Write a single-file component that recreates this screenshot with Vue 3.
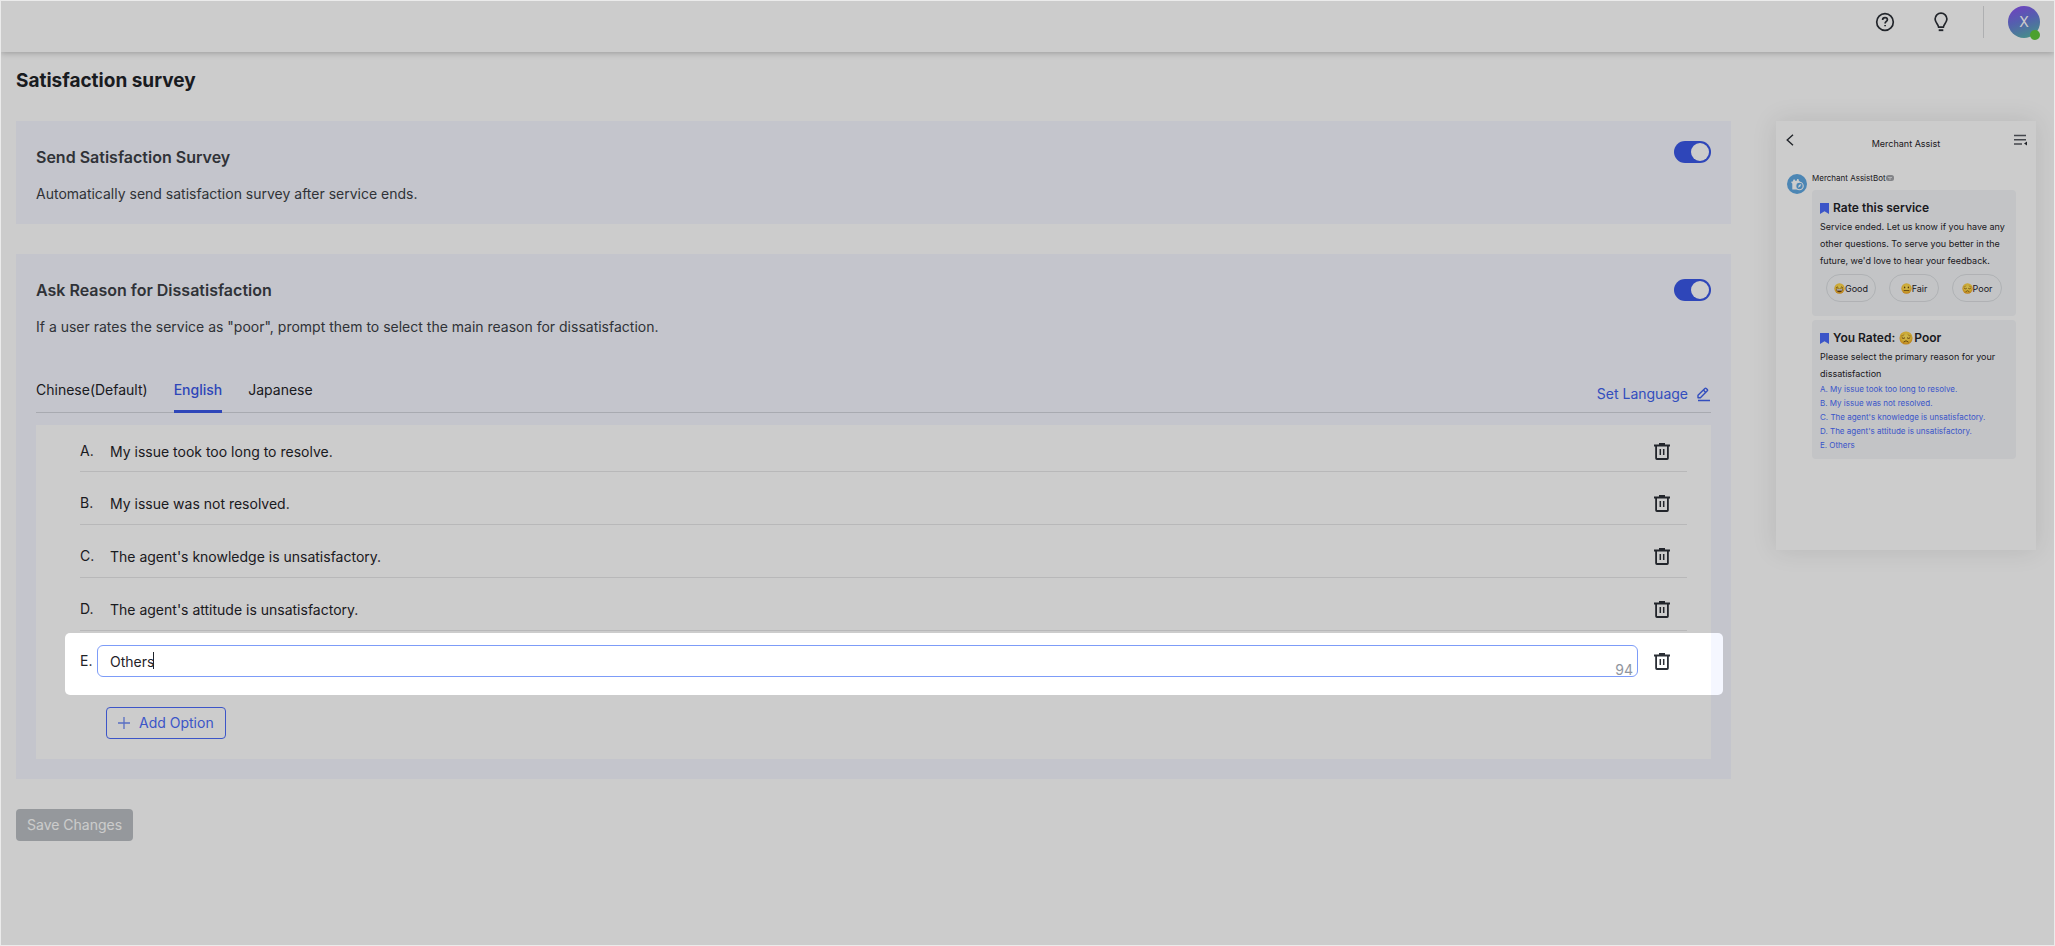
<script setup>
import { ref } from 'vue'

const sendSurvey = ref(true)
const askReason = ref(true)
const tabs = ['Chinese(Default)', 'English', 'Japanese']
const activeTab = ref('English')
const options = ref([
  { letter: 'A', text: 'My issue took too long to resolve.' },
  { letter: 'B', text: 'My issue was not resolved.' },
  { letter: 'C', text: "The agent's knowledge is unsatisfactory." },
  { letter: 'D', text: "The agent's attitude is unsatisfactory." },
  { letter: 'E', text: 'Others', editing: true },
])
const ratings = [
  { label: 'Good', face: 'good' },
  { label: 'Fair', face: 'fair' },
  { label: 'Poor', face: 'poor' },
]
</script>

<template>
  <div class="frame">
    <div class="page">
      <svg class="defs" aria-hidden="true">
        <defs>
          <radialGradient id="face-fill" cx=".5" cy=".4" r=".62">
            <stop offset="0" stop-color="#ffe766" />
            <stop offset=".6" stop-color="#ffd23e" />
            <stop offset="1" stop-color="#ec9a1e" />
          </radialGradient>
          <symbol id="face-good" viewBox="0 0 16 16">
            <circle cx="8" cy="8" r="7.5" fill="url(#face-fill)" />
            <path d="M3.5 6.6q1.2-2 2.6 0M9.9 6.6q1.3-2 2.6 0" fill="none" stroke="#6b3f0a" stroke-width="1.2" stroke-linecap="round" />
            <path d="M2.8 8.5h10.4c-.3 3.2-2.4 5-5.2 5s-4.900-1.800-5.200-5z" fill="#6b3f0a" />
            <path d="M3.500 9h9l-.6 1.800H4.100z" fill="#fff" />
          </symbol>
          <symbol id="face-fair" viewBox="0 0 16 16">
            <circle cx="8" cy="8" r="7.5" fill="url(#face-fill)" />
            <ellipse cx="5.3" cy="6.5" rx="1" ry="1.3" fill="#6b3f0a" />
            <ellipse cx="10.7" cy="6.5" rx="1" ry="1.3" fill="#6b3f0a" />
            <path d="M4.5 11h7" stroke="#6b3f0a" stroke-width="1.2" stroke-linecap="round" />
          </symbol>
          <symbol id="face-poor" viewBox="0 0 16 16">
            <circle cx="8" cy="8" r="7.5" fill="url(#face-fill)" />
            <path d="M2.8 5.8q2-.2 3-1.6M13.2 5.800q-2-.2-3-1.600" fill="none" stroke="#8a5a10" stroke-width=".6" stroke-linecap="round" />
            <path d="M3.600 8q1.400 1.200 2.900 0M9.500 8q1.500 1.200 2.900 0M5.500 12.400q2.500-2.800 5 0" fill="none" stroke="#6b3f0a" stroke-width="1" stroke-linecap="round" />
          </symbol>
          <symbol id="bookmark" viewBox="0 0 9 11">
            <path d="M0 0h9v11L4.500 8.200 0 11z" fill="#4b6bfb" />
          </symbol>
        </defs>
      </svg>

      <header class="topbar">
        <button class="icon-btn" type="button" aria-label="Help">
          <svg width="20" height="20" viewBox="0 0 20 20" fill="none" stroke="#2b2f36" stroke-width="1.7">
            <circle cx="10" cy="10" r="8.300" />
            <path d="M7.600 8.100c0-1.500 1-2.400 2.400-2.400s2.400.9 2.400 2.100c0 1.600-2.300 1.800-2.300 3.700" />
            <path d="M10.100 12.900v1.400" />
          </svg>
        </button>
        <button class="icon-btn" type="button" aria-label="Tips">
          <svg width="20" height="20" viewBox="0 0 20 20" fill="none" stroke="#2b2f36" stroke-width="1.7">
            <path d="M7.600 15.200c0-3-3.500-4.300-3.500-8.200a5.900 5.900 0 0 1 11.800 0c0 3.900-3.500 5.200-3.500 8.200z" stroke-linejoin="round" />
            <path d="M7.700 18.200h4.600" stroke-width="1.900" />
          </svg>
        </button>
        <span class="divider"></span>
        <button class="avatar" type="button" aria-label="Account">X<span class="status"></span></button>
      </header>

      <main class="content">
        <div class="settings">
          <h1>Satisfaction survey</h1>

          <section class="card">
            <div class="card-head top">
              <h2 id="send-title">Send Satisfaction Survey</h2>
              <input v-model="sendSurvey" class="switch" type="checkbox" role="switch" aria-labelledby="send-title" />
            </div>
            <p class="desc">Automatically send satisfaction survey after service ends.</p>
          </section>

          <section class="card reasons">
            <div class="card-head">
              <h2 id="ask-title">Ask Reason for Dissatisfaction</h2>
              <input v-model="askReason" class="switch" type="checkbox" role="switch" aria-labelledby="ask-title" />
            </div>
            <p class="desc">If a user rates the service as "poor", prompt them to select the main reason for dissatisfaction.</p>

            <div class="tab-row">
              <div class="tabs" role="tablist">
                <button
                  v-for="tab in tabs"
                  :key="tab"
                  type="button"
                  role="tab"
                  class="tab"
                  :class="{ active: tab === activeTab }"
                  :aria-selected="tab === activeTab"
                  @click="activeTab = tab"
                >{{ tab }}</button>
              </div>
              <button class="set-language" type="button">
                Set Language
                <svg width="15" height="15" viewBox="0 0 15 15" fill="none" stroke="#4062ee" stroke-width="1.400">
                  <path d="M2 8.300 8.900 1.400a.9.9 0 0 1 1.300 0l1.100 1.100a.9.9 0 0 1 0 1.300L4.400 10.700H2z" stroke-linejoin="round" />
                  <path d="M7.400 3.100l2.300 2.300M2 13.500h12" />
                </svg>
              </button>
            </div>

            <div class="panel">
              <ul class="options">
                <li v-for="option in options" :key="option.letter" class="option" :class="{ editing: option.editing }">
                  <label class="letter" :for="'option-' + option.letter">{{ option.letter }}.</label>
                  <div class="field">
                    <input :id="'option-' + option.letter" v-model="option.text" type="text" :readonly="!option.editing" />
                    <span v-if="option.editing" class="caret"></span>
                    <span v-if="option.editing" class="remaining">94</span>
                  </div>
                  <button class="icon-btn" type="button" :aria-label="'Delete option ' + option.letter">
                    <svg width="18" height="18" viewBox="0 0 18 18" fill="none" stroke="#2b2f36" stroke-width="1.800">
                      <path d="M1 3.500h16M3.100 3.500v12.700q0 .8.800.8h10.200q.8 0 .8-.8V3.500" />
                      <path d="M6 2h6" stroke-width="2" />
                      <path d="M7.300 7v6M10.700 7v6" stroke-width="1.500" />
                    </svg>
                  </button>
                </li>
              </ul>
              <button class="add" type="button">
                <svg width="12" height="12" viewBox="0 0 12 12" stroke="#6f8af5" stroke-width="1.300"><path d="M6 0v12M0 6h12" /></svg>
                Add Option
              </button>
            </div>
          </section>

          <button class="save" type="button">Save Changes</button>
        </div>

        <aside class="phone">
          <div class="phone-bar">
            <svg width="8" height="12" viewBox="0 0 8 12" fill="none" stroke="#2b2f36" stroke-width="1.400"><path d="M7 .7 1.200 6 7 11.300" /></svg>
            <span class="phone-title">Merchant Assist</span>
            <svg width="14" height="12" viewBox="0 0 14 12" fill="none" stroke="#55585f" stroke-width="1.600">
              <path d="M0 1.500h12M0 5.700h12M0 10h8" />
              <path d="M10 9.500l3-2v4z" fill="#2b2f36" stroke="none" />
            </svg>
          </div>

          <div class="chat">
            <svg class="bot" width="20" height="20" viewBox="0 0 20 20">
              <circle cx="10" cy="10" r="10" fill="#5fa8e2" />
              <path d="M4.500 7.500h1.300l.7-2h1.300l.4 1.200h1.500l.5-1.700h1.200l.6 2 1.200.7v7.800H5.300V9.400l-1-.6z" fill="#fff" />
              <circle cx="12.500" cy="12" r="3.700" fill="#5fa8e2" stroke="#fff" stroke-width="1.100" />
              <path d="m10.900 13.700 1-2.600 2.400-1-1 2.500z" fill="#fff" />
            </svg>
            <div class="messages">
              <p class="bot-name">
                Merchant AssistBot
                <svg width="8" height="6" viewBox="0 0 8 6"><rect width="8" height="6" rx="2.500" fill="#a4a6aa" /><path d="M2 2.500h4M3 4h2" stroke="#fff" stroke-width=".7" /></svg>
              </p>
              <section class="bubble rate">
                <h3><svg width="9" height="11"><use href="#bookmark" /></svg>Rate this service</h3>
                <p>Service ended. Let us know if you have any other questions. To serve you better in the future, we'd love to hear your feedback.</p>
                <div class="ratings">
                  <button v-for="rating in ratings" :key="rating.label" type="button">
                    <svg width="11" height="11"><use :href="'#face-' + rating.face" /></svg>{{ rating.label }}
                  </button>
                </div>
              </section>
              <section class="bubble">
                <h3>
                  <svg width="9" height="11"><use href="#bookmark" /></svg>You Rated:
                  <svg class="face" width="14" height="14"><use href="#face-poor" /></svg>Poor
                </h3>
                <p>Please select the primary reason for your dissatisfaction</p>
                <ul class="reasons-list">
                  <li v-for="option in options" :key="option.letter"><a href="#">{{ option.letter }}. {{ option.text }}</a></li>
                </ul>
              </section>
            </div>
          </div>
        </aside>
      </main>
    </div>
  </div>
</template>

<style>
body {
  margin: 0;
}
</style>

<style scoped>
* {
  box-sizing: border-box;
}
.frame {
  min-height: 100vh;
  padding: 1px;
  background: #ebebeb;
  display: flex;
  font-family: Inter, "Liberation Sans", sans-serif;
  font-size: 14px;
  line-height: 20px;
  color: #1f2329;
}
.page {
  flex: 1;
  min-width: 0;
  background: #fff;
  overflow: hidden;
}
h1, h2, h3, p, ul {
  margin: 0;
  padding: 0;
}
ul {
  list-style: none;
}
button {
  font: inherit;
  color: inherit;
  background: none;
  border: 0;
  padding: 0;
  cursor: pointer;
}
svg {
  display: block;
  flex: none;
}
.defs {
  width: 0;
  height: 0;
  position: absolute;
}
.topbar {
  height: 51px;
  padding: 0 14px 10px 0;
  display: flex;
  align-items: center;
  justify-content: flex-end;
  box-shadow: 0 1px 6px rgba(0, 0, 0, 0.25);
}
.topbar .icon-btn {
  margin-right: 36px;
}
.divider {
  width: 1px;
  height: 32px;
  margin: 0 24px 0 -4px;
  background: #dadbde;
}
.avatar {
  position: relative;
  width: 32px;
  height: 32px;
  border-radius: 50%;
  background: linear-gradient(160deg, #8b52f0 5%, #6a78da 45%, #55b8a8 95%);
  color: #fff;
}
.status {
  position: absolute;
  right: 0;
  bottom: -2px;
  width: 10px;
  height: 10px;
  border-radius: 50%;
  background: #5fc93a;
}
.content {
  display: flex;
  align-items: flex-start;
  gap: 45px;
  padding: 15px 18px 0 15px;
}
.settings {
  flex: 1;
  min-width: 0;
}
h1 {
  font-size: 19px;
  line-height: 28px;
  font-weight: 700;
  margin-bottom: 26px;
}
.card {
  background: #f5f7ff;
  padding: 20px;
  margin-bottom: 30px;
}
.card-head {
  display: flex;
  justify-content: space-between;
  align-items: center;
  height: 32px;
}
.card-head.top {
  align-items: flex-start;
}
h2 {
  font-size: 16px;
  line-height: 32px;
  font-weight: 600;
  color: #3c3f46;
}
.desc {
  margin-top: 11px;
  color: #3c3f46;
}
.switch {
  appearance: none;
  margin: 0;
  width: 37px;
  height: 22px;
  border-radius: 11px;
  background: #c0c4cc;
  display: flex;
  align-items: center;
  padding: 0 2px;
  cursor: pointer;
}
.switch::before {
  content: "";
  width: 18px;
  height: 18px;
  border-radius: 50%;
  background: #fff;
}
.switch:checked {
  background: #3a58e8;
  justify-content: flex-end;
}
.tab-row {
  margin-top: 42px;
  display: flex;
  align-items: flex-end;
  justify-content: space-between;
  border-bottom: 1px solid #d3d5dc;
}
.tabs {
  display: flex;
  gap: 26px;
}
.tab {
  height: 34px;
  padding-bottom: 10px;
  margin-bottom: -1px;
  border-bottom: 3px solid transparent;
}
.tab.active {
  color: #3a58e8;
  font-weight: 500;
  border-bottom-color: #3a58e8;
  border-radius: 2px 2px 0 0;
}
.set-language {
  display: flex;
  align-items: center;
  gap: 8px;
  height: 36px;
  margin-top: -3px;
  color: #4062ee;
}
.panel {
  margin-top: 12px;
  padding: 0 24px 20px 44px;
  background: #fff;
}
.option {
  position: relative;
  display: flex;
  align-items: center;
  height: 53px;
  padding: 10px 16px 0 0;
  border-bottom: 1px solid #e6e6e8;
}
.option:first-child {
  height: 47px;
  padding-top: 6px;
}
.option.editing {
  border-bottom: 0;
  height: 64px;
  padding-top: 0;
  padding-bottom: 4px;
}
/* Spotlight: dims everything outside the row being edited */
.option.editing::after {
  content: "";
  position: absolute;
  inset: 2px -36px 0 -15px;
  border-radius: 5px;
  box-shadow: 0 0 0 4000px rgba(0, 0, 0, 0.2);
  pointer-events: none;
  z-index: 5;
}
.letter {
  width: 17px;
  flex: none;
}
.field {
  position: relative;
  flex: 1;
  margin-right: 15px;
}
.field input {
  display: block;
  width: 100%;
  height: 32px;
  padding: 0 12px;
  border: 1px solid transparent;
  border-radius: 6px;
  background: transparent;
  font: inherit;
  color: inherit;
  outline: none;
}
.editing .field input {
  border-color: #7d9cf8;
}
.caret {
  position: absolute;
  left: 56px;
  top: 7px;
  width: 1px;
  height: 17px;
  background: #1f2329;
}
.remaining {
  position: absolute;
  right: 5px;
  bottom: -3px;
  color: #8f959e;
}
.add {
  display: flex;
  align-items: center;
  gap: 9px;
  height: 32px;
  margin: 12px 0 0 26px;
  padding: 0 11px;
  border: 1px solid #4b6bfb;
  border-radius: 4px;
  color: #4b6bfb;
}
.save {
  height: 32px;
  padding: 0 11px;
  border-radius: 4px;
  background: #bbbfc4;
  color: #fff;
}
.phone {
  flex: none;
  width: 260px;
  height: 429px;
  margin-top: 54px;
  background: #fff;
  box-shadow: 0 0 24px rgba(0, 0, 0, 0.1);
  font-size: 9px;
  line-height: 17px;
}
.phone-bar {
  display: flex;
  justify-content: space-between;
  padding: 13px 8px 0 10px;
}
.phone-title {
  margin: 1px 0 0 4px;
}
.chat {
  display: flex;
  gap: 5px;
  padding: 18px 20px 0 11px;
}
.bot {
  margin-top: 4px;
}
.messages {
  flex: 1;
  min-width: 0;
}
.bot-name {
  display: flex;
  align-items: center;
  font-size: 8px;
  line-height: 16px;
  margin-bottom: 4px;
}
.bubble {
  background: #f4f6f8;
  border-radius: 4px;
  padding: 8px 8px 7px;
}
.bubble.rate {
  padding-bottom: 14px;
  margin-bottom: 4px;
}
h3 {
  display: flex;
  align-items: center;
  font-size: 12px;
  line-height: 20px;
  font-weight: 600;
}
h3 svg:first-child {
  margin-right: 4px;
}
.face {
  margin: 0 1px 0 4px;
}
.ratings {
  display: flex;
  justify-content: space-between;
  padding: 5px 6px 0;
}
.ratings button {
  width: 50px;
  height: 28px;
  display: flex;
  align-items: center;
  justify-content: center;
  border: 1px solid #dcdee2;
  border-radius: 14px;
}
.reasons-list {
  font-size: 8px;
  line-height: 14px;
}
.reasons-list a {
  color: #4b6bfb;
  text-decoration: none;
  display: block;
}
</style>
